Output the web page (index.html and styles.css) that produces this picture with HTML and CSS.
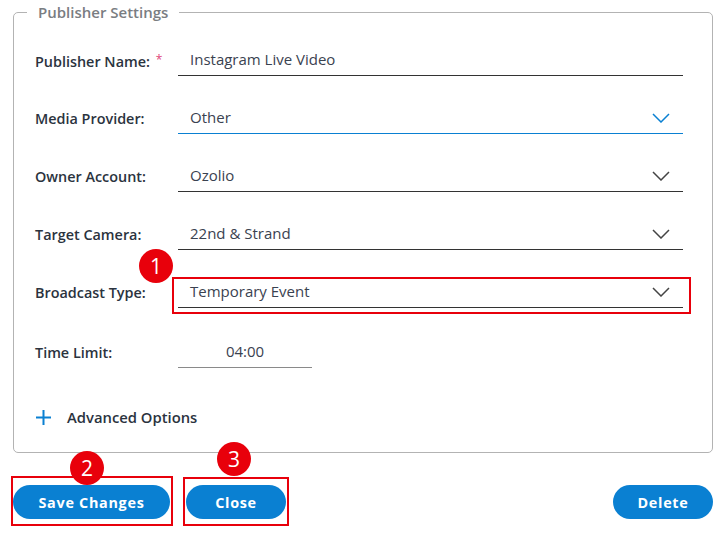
FILE: index.html
```html
<!DOCTYPE html>
<html>
<head>
<meta charset="utf-8">
<link rel="stylesheet" href="styles.css">
</head>
<body>
<div class="page">
  <fieldset class="settings">
    <legend class="legend">Publisher Settings</legend>
    <div class="body">
      <div class="row">
        <span class="label">Publisher Name: <span class="req">*</span></span>
        <div class="field"><span class="value">Instagram Live Video</span></div>
      </div>
      <div class="row">
        <span class="label">Media Provider:</span>
        <div class="field field-active"><span class="value">Other</span>
          <svg class="chev" width="18" height="10" viewBox="0 0 18 10"><polyline points="1,1 9,9 17,1" fill="none" stroke="currentColor" stroke-width="1.5"/></svg>
        </div>
      </div>
      <div class="row">
        <span class="label">Owner Account:</span>
        <div class="field"><span class="value">Ozolio</span>
          <svg class="chev" width="18" height="10" viewBox="0 0 18 10"><polyline points="1,1 9,9 17,1" fill="none" stroke="currentColor" stroke-width="1.5"/></svg>
        </div>
      </div>
      <div class="row">
        <span class="label">Target Camera:</span>
        <div class="field"><span class="value">22nd &amp; Strand</span>
          <svg class="chev" width="18" height="10" viewBox="0 0 18 10"><polyline points="1,1 9,9 17,1" fill="none" stroke="currentColor" stroke-width="1.5"/></svg>
        </div>
      </div>
      <div class="row">
        <span class="label">Broadcast Type:</span>
        <div class="field annotated"><span class="value">Temporary Event</span>
          <svg class="chev" width="18" height="10" viewBox="0 0 18 10"><polyline points="1,1 9,9 17,1" fill="none" stroke="currentColor" stroke-width="1.5"/></svg>
          <span class="mark mark-field"></span>
          <span class="badge badge-1">1</span>
        </div>
      </div>
      <div class="row row-time">
        <span class="label">Time Limit:</span>
        <div class="field field-time"><span class="value">04:00</span></div>
      </div>
      <div class="advanced">
        <svg class="plus" width="15" height="15" viewBox="0 0 15 15"><path d="M7.5 0V15M0 7.5H15" stroke="#0a80d2" stroke-width="2"/></svg>
        <span class="adv-text">Advanced Options</span>
      </div>
    </div>
  </fieldset>
  <div class="actions">
    <div class="btn-wrap wrap-save">
      <button class="btn btn-save">Save Changes</button>
      <span class="mark mark-save"></span>
      <span class="badge badge-2">2</span>
    </div>
    <div class="btn-wrap wrap-close">
      <button class="btn btn-close">Close</button>
      <span class="mark mark-close"></span>
      <span class="badge badge-3">3</span>
    </div>
    <button class="btn btn-delete">Delete</button>
  </div>
</div>
</body>
</html>
```
FILE: styles.css
```css
* { box-sizing: border-box; }
html, body { margin: 0; padding: 0; background: #fff; }
body {
  font-family: "Open Sans", "Liberation Sans", sans-serif;
  color: #2f3742;
  width: 725px;
  height: 549px;
  overflow: hidden;
}
.page {
  padding: 0 12px 0 13px;
}
.settings {
  margin: 3px 0 0 0;
  padding: 0;
  border: 1px solid #b3b3b3;
  border-radius: 5px;
  min-width: 0;
}
.legend {
  margin-left: 13px;
  padding: 0 11px;
  font-size: 15px;
  line-height: 18px;
  font-weight: 600;
  color: #7a7d82;
}
.body {
  padding: 18px 29px 25px 21px;
}
.row {
  display: flex;
  align-items: center;
  margin-top: 21px;
}
.row:first-child { margin-top: 0; }
.label {
  width: 143px;
  flex: none;
  font-size: 14.4px;
  font-weight: 600;
  color: #2b333e;
  padding-top: 6px;
}
.req {
  color: #e0457b;
  font-weight: 400;
  font-size: 12px;
  vertical-align: 3px;
  margin-left: 2px;
}
.field {
  position: relative;
  flex: 1;
  height: 37px;
  display: flex;
  align-items: center;
  padding: 4px 13px 0 12px;
  border-bottom: 1px solid #333;
  color: #444;
}
.field-active {
  border-bottom-color: #0a80d2;
  color: #0a80d2;
}
.value {
  font-size: 15px;
  color: #3a4250;
}
.chev {
  margin-left: auto;
  margin-top: 1px;
  display: block;
}
.field-time {
  flex: none;
  width: 134px;
  justify-content: center;
  padding-left: 0;
  padding-right: 0;
  border-bottom-color: #8a8a8a;
}
.row-time { margin-top: 23px; }
.advanced {
  display: flex;
  align-items: center;
  margin-top: 39px;
  padding-left: 1px;
  height: 20px;
}
.plus { display: block; }
.adv-text {
  margin-left: 16px;
  font-size: 14.8px;
  font-weight: 600;
  color: #2b333e;
}
.actions {
  display: flex;
  align-items: center;
  margin-top: 32px;
}
.btn-wrap {
  position: relative;
}
.btn {
  display: block;
  height: 34px;
  border: none;
  border-radius: 17px;
  background: #0a80d2;
  color: #fff;
  font-family: "Open Sans", "Liberation Sans", sans-serif;
  font-size: 14.4px;
  font-weight: 700;
  letter-spacing: 0.7px;
  padding: 0;
}
.btn-save { width: 157px; }
.wrap-close { margin-left: 16px; }
.btn-close { width: 100px; }
.btn-delete { width: 100px; margin-left: auto; }
.mark {
  position: absolute;
  border: 2px solid #e8000b;
  pointer-events: none;
}
.mark-field { left: -6px; right: -8px; top: 6px; bottom: -7px; }
.mark-save { left: -2px; right: -3px; top: -9px; bottom: -7px; }
.mark-close { left: -3px; right: -3px; top: -8px; bottom: -7px; }
.badge {
  position: absolute;
  width: 34px;
  height: 34px;
  border-radius: 50%;
  background: #e8000b;
  color: #fff;
  font-size: 21px;
  line-height: 34px;
  text-align: center;
  font-family: "Open Sans", "Liberation Sans", sans-serif;
}
.badge-1 { left: -39px; top: -22px; }
.badge-2 { left: 57px; top: -34px; }
.badge-3 { left: 31px; top: -43px; }
```
